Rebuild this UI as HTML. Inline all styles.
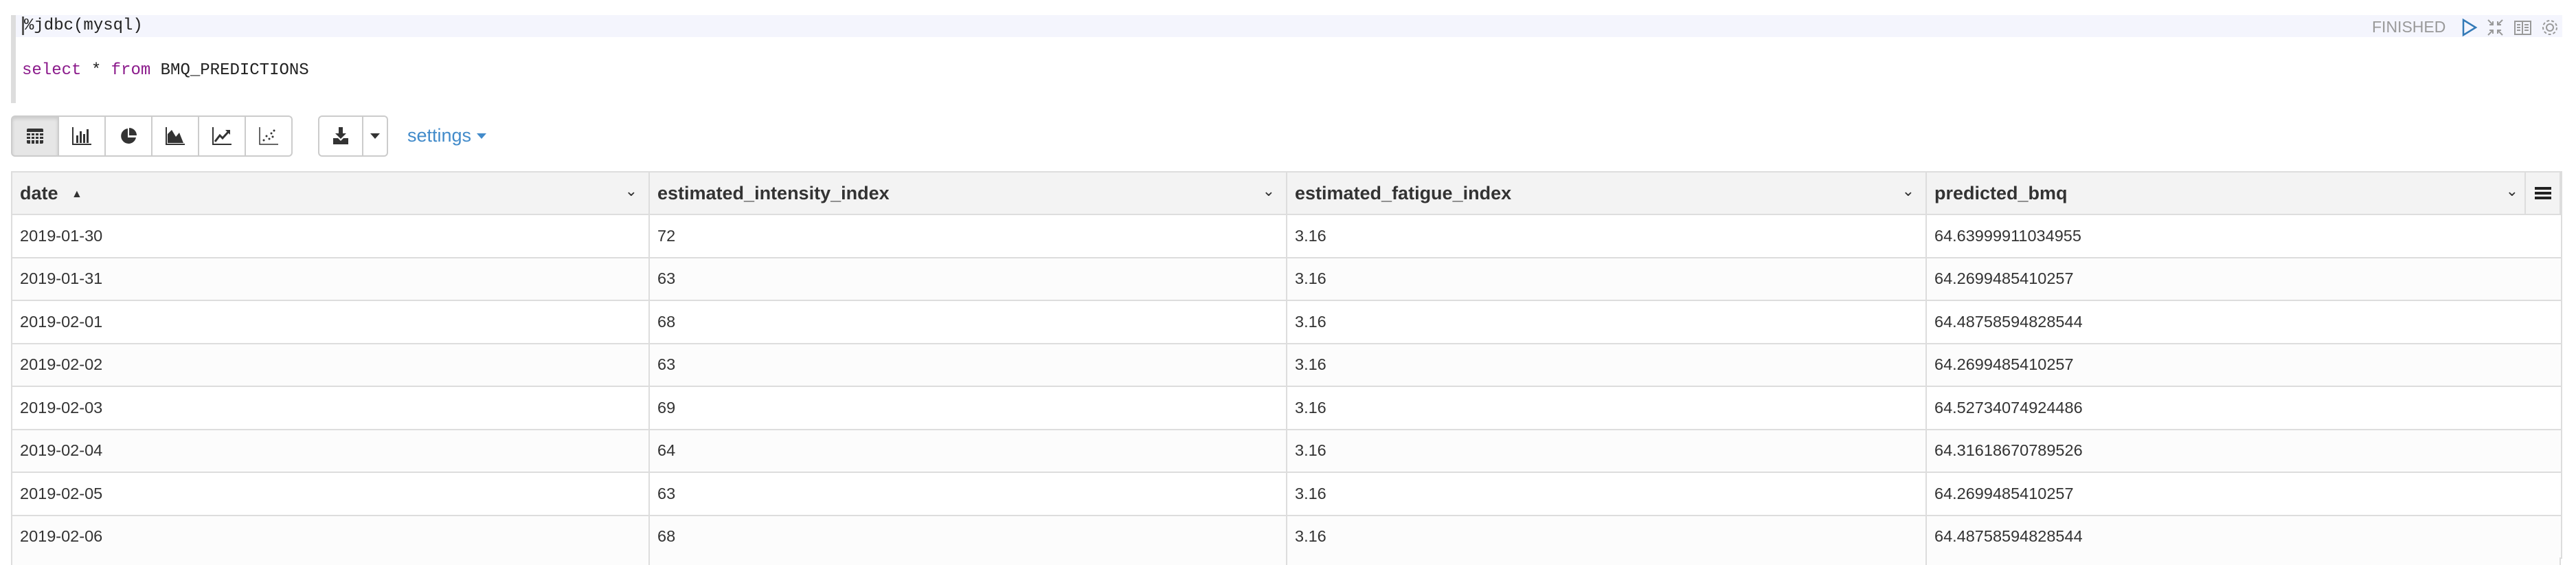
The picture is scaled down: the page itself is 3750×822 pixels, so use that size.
<!DOCTYPE html>
<html style="width:3750px;height:822px;overflow:hidden"><head><meta charset="utf-8"><style>
*{margin:0;padding:0;box-sizing:border-box}
body{width:3750px;height:822px;overflow:hidden;background:#fff;font-family:"Liberation Sans",sans-serif;position:relative}
.abs{position:absolute}
.code{font-family:"Liberation Mono",monospace;font-size:24px;color:#222;white-space:pre}
.btn{position:absolute;top:168px;height:60px;border:2px solid #ccc;background:#fff;display:flex;align-items:center;justify-content:center}
table{position:absolute;left:16px;top:249px;border-collapse:collapse;table-layout:fixed;width:3712px}
td,th{height:62.5px;font-size:23.5px;color:#333;text-align:left;padding:0 0 0 11px;border:2px solid #ddd;border-top:none;white-space:nowrap;overflow:hidden;position:relative}
th{background:#f3f3f3;font-weight:bold;font-size:27px;border-top:2px solid #ddd;height:62px}
tr:nth-child(odd) td{background:#fcfcfc}
.chev{position:absolute;right:16px;top:14px;font-size:22px;font-weight:normal;color:#333}
</style></head><body>
<div class="abs" style="left:16px;top:22px;width:7px;height:128px;background:#ddd"></div>
<div class="abs" style="left:23px;top:22px;width:3707px;height:32px;background:#f4f5fd"></div>
<div class="abs code" style="left:32px;top:22px;line-height:32px"><span style="border-left:3px solid #555">%</span>jdbc(mysql)</div>
<div class="abs code" style="left:32px;top:87px;line-height:32px"><span style="color:#8b1a8b">select</span> * <span style="color:#8b1a8b">from</span> BMQ_PREDICTIONS</div>
<div class="abs" style="left:3453px;top:24px;font-size:23px;color:#999;line-height:30px">FINISHED</div>
<svg class="abs" style="left:3580px;top:26px" width="150" height="28" viewBox="0 0 150 28">
<path d="M6 3 L24 14 L6 25 Z" fill="none" stroke="#337ab7" stroke-width="2.5"/>
<g stroke="#999" stroke-width="2" fill="none"><path d="M42 3 L49 10 M49 5 V10 H44 M63 3 L56 10 M56 5 V10 H61 M42 25 L49 18 M49 23 V18 H44 M63 25 L56 18 M56 23 V18 H61"/>
<path d="M81 5 H92 V24 H81 Z M92 5 H104 V24 H92 M84 10 H89 M84 14 H89 M84 18 H89 M95 10 H101 M95 14 H101 M95 18 H101"/>
<circle cx="132" cy="14" r="5"/><circle cx="132" cy="14" r="10" stroke-dasharray="4 3"/></g></svg>
<div class="btn" style="left:16px;width:70px;background:#e6e6e6;border-radius:6px 0 0 6px;box-shadow:inset 0 3px 5px rgba(0,0,0,.12)"><svg width="24" height="22"><g fill="#333"><rect x="0" y="0" width="24" height="22" rx="2"/></g><g stroke="#e6e6e6" stroke-width="2"><path d="M0 6H24M0 11H24M0 16H24M6 6V22M12 6V22M18 6V22"/></g></svg></div>
<div class="btn" style="left:84px;width:70px"><svg width="28" height="26"><path d="M1 0V25H28" stroke="#333" stroke-width="2" fill="none"/><g fill="#333"><rect x="6" y="12" width="3" height="11"/><rect x="11" y="6" width="3" height="17"/><rect x="16" y="10" width="3" height="13"/><rect x="21" y="3" width="3" height="20"/></g></svg></div>
<div class="btn" style="left:152px;width:70px"><svg width="26" height="26"><path d="M12 2 A11 11 0 1 0 24 15 L12 15 Z" fill="#333"/><path d="M14 1 A11 11 0 0 1 25 12 L14 12Z" fill="#333"/></svg></div>
<div class="btn" style="left:220px;width:70px"><svg width="28" height="26"><path d="M1 0V25H28" stroke="#333" stroke-width="2" fill="none"/><path d="M3 23 L3 10 L9 4 L15 14 L20 8 L26 23Z" fill="#333"/></svg></div>
<div class="btn" style="left:288px;width:70px"><svg width="28" height="26"><path d="M1 0V25H28" stroke="#333" stroke-width="2" fill="none"/><path d="M4 21 L11 12 L15 16 L25 5" stroke="#333" stroke-width="3" fill="none"/><path d="M19 4H26V11Z" fill="#333"/></svg></div>
<div class="btn" style="left:356px;width:70px;border-radius:0 6px 6px 0"><svg width="28" height="26"><path d="M1 0V25H28" stroke="#333" stroke-width="1.5" fill="none"/><g fill="#333"><circle cx="7" cy="19" r="1.5"/><circle cx="11" cy="13" r="1.5"/><circle cx="15" cy="17" r="1.5"/><circle cx="18" cy="9" r="1.5"/><circle cx="22" cy="5" r="1.5"/><circle cx="20" cy="14" r="1.5"/></g></svg></div>
<div class="btn" style="left:463px;width:66px;border-radius:6px 0 0 6px"><svg width="24" height="26"><path d="M9 0H15V9H20L12 17L4 9H9Z" fill="#333"/><path d="M1 16V25H23V16H16L12 20L8 16Z" fill="#333"/></svg></div>
<div class="btn" style="left:527px;width:38px;border-radius:0 6px 6px 0"><svg width="14" height="9"><path d="M0 0H14L7 8Z" fill="#333"/></svg></div>
<div class="abs" style="left:593px;top:180px;font-size:27px;color:#428bca;line-height:34px">settings <svg width="14" height="9" style="vertical-align:middle"><path d="M0 0H14L7 8Z" fill="#428bca"/></svg></div>
<table>
<colgroup><col style="width:928px"><col style="width:928px"><col style="width:931px"><col style="width:925px"></colgroup>
<tr><th>date <span style="font-size:16px;margin-left:12px;vertical-align:3px">▲</span><span class="chev">⌄</span></th><th>estimated_intensity_index<span class="chev">⌄</span></th><th>estimated_fatigue_index<span class="chev">⌄</span></th><th>predicted_bmq<span class="chev" style="right:62px">⌄</span></th></tr>
<tr><td>2019-01-30</td><td>72</td><td>3.16</td><td>64.63999911034955</td></tr>
<tr><td>2019-01-31</td><td>63</td><td>3.16</td><td>64.2699485410257</td></tr>
<tr><td>2019-02-01</td><td>68</td><td>3.16</td><td>64.48758594828544</td></tr>
<tr><td>2019-02-02</td><td>63</td><td>3.16</td><td>64.2699485410257</td></tr>
<tr><td>2019-02-03</td><td>69</td><td>3.16</td><td>64.52734074924486</td></tr>
<tr><td>2019-02-04</td><td>64</td><td>3.16</td><td>64.31618670789526</td></tr>
<tr><td>2019-02-05</td><td>63</td><td>3.16</td><td>64.2699485410257</td></tr>
<tr><td>2019-02-06</td><td>68</td><td>3.16</td><td>64.48758594828544</td></tr>
</table>
<div class="abs" style="left:16px;top:811px;width:3712px;height:11px;border-left:2px solid #ddd;border-right:2px solid #ddd;background:#fcfcfc"></div>
<div class="abs" style="left:944px;top:811px;width:2px;height:11px;background:#ddd"></div>
<div class="abs" style="left:1872px;top:811px;width:2px;height:11px;background:#ddd"></div>
<div class="abs" style="left:2803px;top:811px;width:2px;height:11px;background:#ddd"></div>
<div class="abs" style="left:3675px;top:249px;width:53px;height:64px;background:#f3f3f3;border:2px solid #ddd;display:flex;align-items:center;justify-content:center"><svg width="24" height="20"><g fill="#222"><rect y="1" width="24" height="4"/><rect y="8" width="24" height="4"/><rect y="15" width="24" height="4"/></g></svg></div>
</body></html>
